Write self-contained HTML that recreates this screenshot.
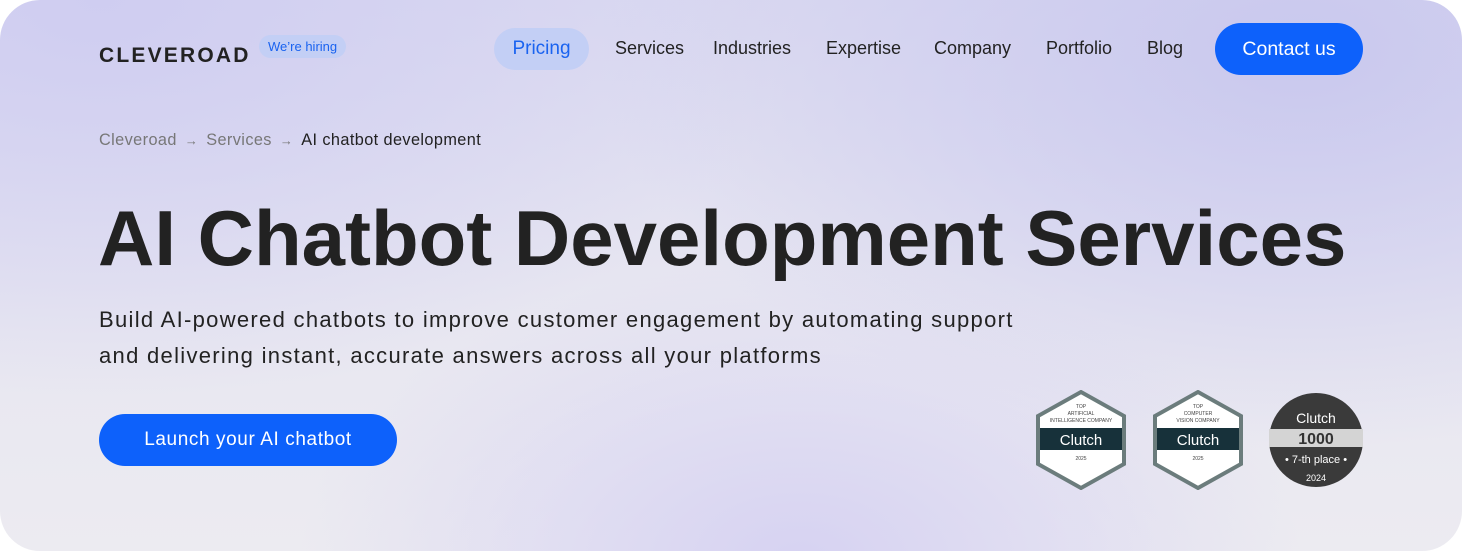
<!DOCTYPE html>
<html><head><meta charset="utf-8"><style>
*{margin:0;padding:0;box-sizing:border-box}
html,body{width:1462px;height:551px;background:#fff;overflow:hidden;font-family:"Liberation Sans",sans-serif;color:#222}
.hero{position:absolute;left:0;top:0;width:1462px;height:551px;border-radius:40px;overflow:hidden;
background:radial-gradient(ellipse 500px 300px at 800px 560px,#d6d2f2 0%,rgba(214,210,242,0) 100%),
radial-gradient(ellipse 700px 400px at 1300px 50px,#c9c8ee 0%,rgba(201,200,238,0) 100%),
radial-gradient(ellipse 700px 400px at 100px 0px,#cfcdf1 0%,rgba(207,205,241,0) 100%),
linear-gradient(180deg,#dcdbf1 0%,#e8e7f1 60%,#ecebf1 100%)}
.abs{position:absolute;white-space:nowrap}
.logo{left:99px;top:44px;font-size:21px;font-weight:bold;letter-spacing:2.2px;color:#222}
.hiring{left:259px;top:35px;height:23px;padding:0 9px;border-radius:12px;background:#c3cff5;color:#1a63f0;font-size:13px;line-height:23px}
.pricing{left:494px;top:28px;width:95px;height:42px;border-radius:21px;background:#c3cff5;color:#1a63f0;font-size:19px;line-height:42px;text-align:center}
.nav{top:38px;font-size:18px;color:#222}
.contact{left:1215px;top:23px;width:148px;height:52px;border-radius:26px;background:#0d61fb;color:#fff;font-size:19.5px;line-height:52px;text-align:center}
.bc{top:131px;font-size:16.3px;letter-spacing:0.4px;color:#777}
h1{position:absolute;left:98px;top:193px;font-size:78px;font-weight:bold;letter-spacing:0;color:#222;white-space:nowrap}
.sub{left:99px;top:302px;font-size:22px;letter-spacing:1.3px;line-height:36px;color:#222}
.cta{left:99px;top:414px;width:298px;height:52px;border-radius:26px;background:#0d61fb;color:#fff;font-size:19px;letter-spacing:0.6px;line-height:52px;text-align:center}
</style></head><body>
<div class="hero">
<div class="abs logo">CLEVEROAD</div>
<div class="abs hiring">We’re hiring</div>
<div class="abs pricing">Pricing</div>
<div class="abs nav" style="left:615px">Services</div>
<div class="abs nav" style="left:713px">Industries</div>
<div class="abs nav" style="left:826px">Expertise</div>
<div class="abs nav" style="left:934px">Company</div>
<div class="abs nav" style="left:1046px">Portfolio</div>
<div class="abs nav" style="left:1147px">Blog</div>
<div class="abs contact">Contact us</div>
<div class="abs bc" style="left:99px">Cleveroad<span style="margin:0 8px;font-size:13px">→</span>Services<span style="margin:0 8px;font-size:13px">→</span><span style="color:#222">AI chatbot development</span></div>
<h1>AI Chatbot Development Services</h1>
<div class="abs sub">Build AI-powered chatbots to improve customer engagement by automating support<br>and delivering instant, accurate answers across all your platforms</div>
<div class="abs cta">Launch your AI chatbot</div>
<svg class="abs" style="left:1034px;top:390px" width="94" height="100" viewBox="0 0 94 100">
<polygon points="47,2 90,26 90,74 47,98 4,74 4,26" fill="#fff" stroke="#6b7c7c" stroke-width="4"/>
<rect x="6" y="38" width="82" height="22" fill="#17313a"/>
<text x="47" y="55" font-size="15" fill="#fff" text-anchor="middle" font-family="Liberation Sans">Clutch</text>
<text x="47" y="18" font-size="5" fill="#444" text-anchor="middle">TOP</text>
<text x="47" y="25" font-size="5" fill="#444" text-anchor="middle">ARTIFICIAL</text>
<text x="47" y="32" font-size="5" fill="#444" text-anchor="middle">INTELLIGENCE COMPANY</text>
<text x="47" y="70" font-size="5" fill="#444" text-anchor="middle">2025</text></svg>
<svg class="abs" style="left:1151px;top:390px" width="94" height="100" viewBox="0 0 94 100">
<polygon points="47,2 90,26 90,74 47,98 4,74 4,26" fill="#fff" stroke="#6b7c7c" stroke-width="4"/>
<rect x="6" y="38" width="82" height="22" fill="#17313a"/>
<text x="47" y="55" font-size="15" fill="#fff" text-anchor="middle" font-family="Liberation Sans">Clutch</text>
<text x="47" y="18" font-size="5" fill="#444" text-anchor="middle">TOP</text>
<text x="47" y="25" font-size="5" fill="#444" text-anchor="middle">COMPUTER</text>
<text x="47" y="32" font-size="5" fill="#444" text-anchor="middle">VISION COMPANY</text>
<text x="47" y="70" font-size="5" fill="#444" text-anchor="middle">2025</text></svg>
<svg class="abs" style="left:1268px;top:392px" width="96" height="96" viewBox="0 0 96 96">
<circle cx="48" cy="48" r="47" fill="#3a3a3a"/>
<rect x="1" y="37" width="94" height="18" fill="#d4d4d4"/>
<text x="48" y="31" font-size="14" fill="#fff" text-anchor="middle">Clutch</text>
<text x="48" y="52" font-size="16" font-weight="bold" fill="#333" text-anchor="middle">1000</text>
<text x="48" y="71" font-size="11" fill="#fff" text-anchor="middle">• 7-th place •</text>
<text x="48" y="89" font-size="9" fill="#fff" text-anchor="middle">2024</text></svg>
</div>
</body></html>
